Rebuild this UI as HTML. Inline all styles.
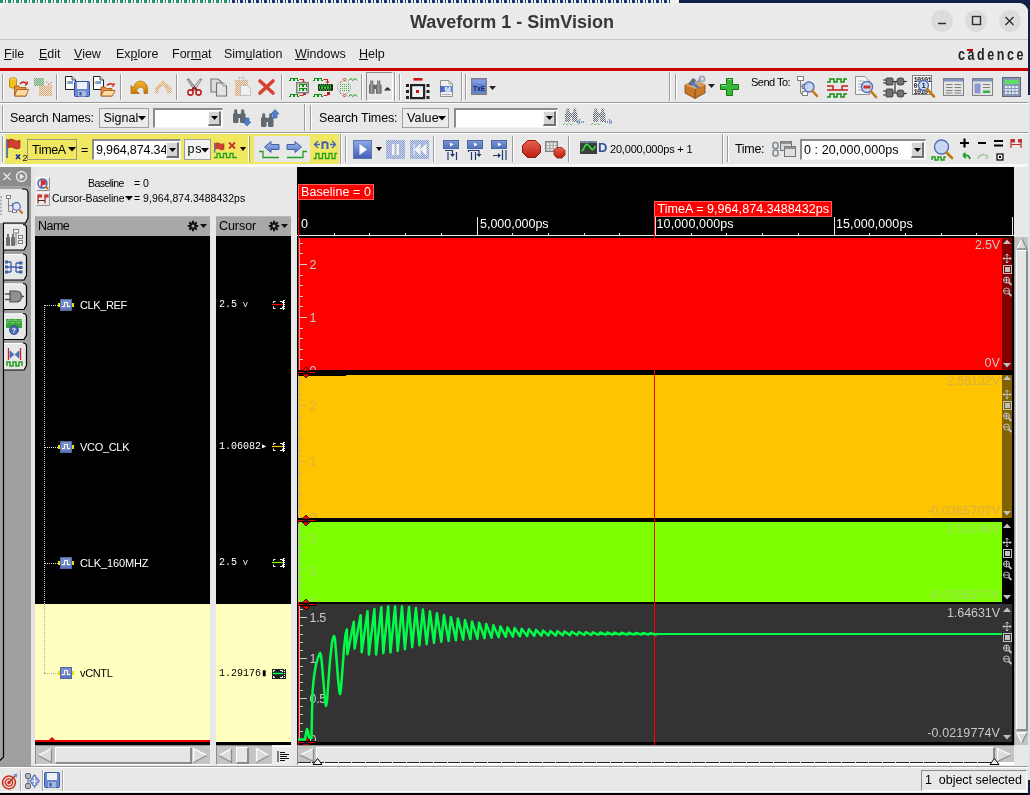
<!DOCTYPE html>
<html><head><meta charset="utf-8">
<style>
*{box-sizing:border-box;margin:0;padding:0}
html,body{width:1030px;height:795px;overflow:hidden;background:#10204a;font-family:"Liberation Sans",sans-serif;}
#root{position:absolute;left:0;top:0;width:1030px;height:795px;overflow:hidden;will-change:transform}
.a{position:absolute}
svg{position:absolute;overflow:visible}
#bgtop{position:absolute;left:0;top:0;width:679px;height:12px;background:#f4f4f4}
#bgtop2{position:absolute;left:0;top:0;width:232px;height:3px;background:repeating-linear-gradient(90deg,#2a9078 0,#2a9078 3px,#e8f0ec 3px,#e8f0ec 5px,#2a9078 5px,#2a9078 6px,#f4f4f4 6px,#f4f4f4 8px)}
#bgtop3{position:absolute;left:232px;top:0;width:440px;height:3px;background:repeating-linear-gradient(90deg,#1c3470 0,#1c3470 3px,#e8ecf4 3px,#e8ecf4 5px,#1c3470 5px,#1c3470 6px,#f4f4f4 6px,#f4f4f4 8px)}
#win{position:absolute;left:0;top:3px;width:1028px;height:790px;background:#e8e8e8;border-radius:9px 9px 0 0;overflow:hidden}
#title{position:absolute;left:0;top:0;width:1028px;height:37px;background:#ebebeb;border-bottom:1px solid #c6c6c6}
#title .t{position:absolute;left:0;width:1024px;top:7px;text-align:center;font-weight:bold;font-size:18px;color:#2e2e2e}
.wbtn{position:absolute;top:7px;width:22px;height:22px;border-radius:11px;background:#dcdcdc}
#menu{position:absolute;left:0;top:37px;width:1028px;height:28px}
#menu span{position:absolute;top:7px;font-size:12.5px;color:#111}
#redline{position:absolute;left:0;top:65px;width:1028px;height:3px;background:#cc0000}
.hl{position:absolute;left:0;width:1028px;height:1px}
.t{position:absolute;font-size:12.5px;color:#000;white-space:nowrap;line-height:14px}
.g{color:#c8c8c8}
.w{color:#fff}
.m{font-family:"Liberation Mono",monospace;font-size:10px;color:#fff;position:absolute;white-space:nowrap;line-height:12px}
</style></head><body><div id="root">
<div id="bgtop"></div><div id="bgtop2"></div><div id="bgtop3"></div>
<div class="a" style="left:1028px;top:95px;width:2px;height:685px;background:#dfe3ec"></div>
<div class="a" style="left:0;top:793px;width:1028px;height:2px;background:#000"></div>
<div id="win">
 <div id="title"><div class="t" style="position:absolute;left:0;width:1024px;top:9px;text-align:center;font-weight:bold;font-size:18px;line-height:normal;color:#383838">Waveform 1 - SimVision</div>
  <div class="wbtn" style="left:931px"></div><div class="wbtn" style="left:965px"></div><div class="wbtn" style="left:999px"></div>
  <svg style="left:931px;top:7px" width="90" height="22" viewBox="0 0 90 22"><g stroke="#2e2e2e" stroke-width="1.4" fill="none"><path d="M7 13.500H15"/><rect x="41.5" y="6.5" width="8" height="8"/><path d="M74.5 7l8 8M82.500 7l-8 8"/></g></svg>
 </div>
 <div id="menu">
  <span style="left:4px"><u>F</u>ile</span><span style="left:39px"><u>E</u>dit</span><span style="left:74px"><u>V</u>iew</span><span style="left:116px">Ex<u>p</u>lore</span><span style="left:172px">For<u>m</u>at</span><span style="left:224px">Sim<u>u</u>lation</span><span style="left:295px"><u>W</u>indows</span><span style="left:359px"><u>H</u>elp</span>
  <div class="a" style="left:957.500px;top:5.500px;font-size:16px;letter-spacing:3.300px;color:#222;font-weight:bold;transform:scaleX(0.78);transform-origin:left">cadence</div>
  <div class="a" style="left:967px;top:9px;width:6px;height:2px;background:#cc0000"></div>
 </div>
 <div id="redline"></div>
<div id="tb" class="a" style="left:0;top:68px;width:1028px;height:96px">
<div class="hl" style="top:31px;background:#9a9a9a"></div><div class="hl" style="top:32px;background:#fff"></div>
<div class="hl" style="top:61px;background:#9a9a9a"></div><div class="hl" style="top:62px;background:#fff"></div>
<div class="a" style="left:5px;top:63px;width:334px;height:30px;background:#f0e860;"></div>
<div class="a" style="left:254px;top:65px;width:56px;height:26px;background:#e8e8e8;"></div>
<div class="hl" style="top:93px;background:#f8f8f8;height:3px"></div>
<div class="a" style="left:2px;top:3px;width:1px;height:26px;background:#9c9c9c;"></div>
<div class="a" style="left:3px;top:3px;width:1px;height:26px;background:#fff;"></div>
<svg style="left:9px;top:6px" width="20" height="20" viewBox="0 0 20 20"><ellipse cx="4" cy="2.500" rx="3.500" ry="1.800" fill="#ffe860" stroke="#b08000" stroke-width="0.800"/><path d="M0.500 2.500V10Q4 12.500 7.500 10V2.500" fill="#f0c020" stroke="#b08000" stroke-width="0.800"/><path d="M5.500 9H10L11.500 10.500H17V19H5.500Z" fill="#e89040" stroke="#a05010" stroke-width="0.800"/><path d="M5.500 19L8 12.500H19.500L17 19Z" fill="#ffd8a0" stroke="#a05010" stroke-width="0.800"/><path d="M11 7Q14 3 18 7M18 7L16 8.500M18 7L18.500 4.500" stroke="#d02020" stroke-width="1.300" fill="none"/></svg>
<svg style="left:33px;top:6px" width="20" height="20" viewBox="0 0 20 20"><defs><pattern id="dg" width="2" height="2" patternUnits="userSpaceOnUse"><rect width="1" height="1" fill="#60c060"/><rect x="1" y="1" width="1" height="1" fill="#60c060"/></pattern><pattern id="do" width="2" height="2" patternUnits="userSpaceOnUse"><rect width="1" height="1" fill="#e0a060"/><rect x="1" y="1" width="1" height="1" fill="#e0a060"/></pattern><pattern id="dk" width="2" height="2" patternUnits="userSpaceOnUse"><rect width="1" height="1" fill="#606878"/><rect x="1" y="1" width="1" height="1" fill="#606878"/></pattern><pattern id="db" width="2" height="2" patternUnits="userSpaceOnUse"><rect width="1" height="1" fill="#5070b8"/><rect x="1" y="1" width="1" height="1" fill="#5070b8"/></pattern></defs><rect x="1" y="1" width="10" height="8" fill="url(#dg)"/><rect x="1" y="1" width="10" height="8" fill="#888" opacity="0.250"/><rect x="6" y="9" width="13" height="10" fill="url(#do)"/><path d="M13 5L19 9M19 5L14 9" stroke="#e06060" stroke-width="1" stroke-dasharray="1 1"/></svg>
<div class="a" style="left:56px;top:3px;width:1px;height:26px;background:#9c9c9c;"></div>
<div class="a" style="left:57px;top:3px;width:1px;height:26px;background:#fff;"></div>
<svg style="left:65px;top:5px" width="25" height="21" viewBox="0 0 25 21"><path d="M0.500 0.500H7L10.500 4V13.500H0.500Z" fill="#fff" stroke="#222" stroke-width="1"/><path d="M7 0.500V4H10.500" fill="#ddd" stroke="#222" stroke-width="0.800"/><rect x="2" y="5" width="6" height="3" fill="#70a0e0"/><rect x="1.500" y="5.500" width="2" height="1.500" fill="#e8d040"/><rect x="9.500" y="5.500" width="15" height="15" rx="1" fill="#6888d0" stroke="#3050a0"/><rect x="12" y="6" width="10" height="7" fill="#f0f0f8"/><rect x="13" y="15" width="8" height="5.500" fill="#a8b8e0"/><rect x="14.500" y="16" width="2" height="3.500" fill="#3050a0"/></svg>
<svg style="left:93px;top:5px" width="25" height="21" viewBox="0 0 25 21"><path d="M0.500 0.500H7L10.500 4V13.500H0.500Z" fill="#fff" stroke="#222" stroke-width="1"/><path d="M7 0.500V4H10.500" fill="#ddd" stroke="#222" stroke-width="0.800"/><rect x="2" y="5" width="6" height="3" fill="#70a0e0"/><rect x="1.500" y="5.500" width="2" height="1.500" fill="#e8d040"/><path d="M8 11H12L13.500 12.500H19V20H8Z" fill="#e89040" stroke="#a05010" stroke-width="0.800"/><path d="M8 20L10.500 14.500H22L19.500 20Z" fill="#ffd8a0" stroke="#a05010" stroke-width="0.800"/><path d="M14 9.500Q17 6 21 9.500M21 9.500L19 10.500M21 9.500V7" stroke="#d02020" stroke-width="1.300" fill="none"/></svg>
<div class="a" style="left:120px;top:3px;width:1px;height:26px;background:#9c9c9c;"></div>
<div class="a" style="left:121px;top:3px;width:1px;height:26px;background:#fff;"></div>
<svg style="left:130px;top:9px" width="19" height="15" viewBox="0 0 19 15"><defs><linearGradient id="ug" x1="0" y1="0" x2="0" y2="1"><stop offset="0" stop-color="#f8b830"/><stop offset="1" stop-color="#c87800"/></linearGradient></defs><path d="M1 5.500V13.500H9.500L6.500 10.500Q8.500 6 12 7Q14.500 8.500 14 13.500H17.500Q19 2.500 11 1Q5 1 3.500 8Z" fill="url(#ug)" stroke="#a86800" stroke-width="0.700"/></svg>
<svg style="left:154px;top:9px" width="19" height="15" viewBox="0 0 19 15"><path d="M1 8.500L9 1L17.500 8.500V13.500H13V10L9 5.500L4.500 10V13.500H1Z" fill="url(#do)"/><path d="M1 8.500L9 1L17.500 8.500" stroke="#f0c060" stroke-width="1.200" fill="none" stroke-dasharray="1 1"/></svg>
<div class="a" style="left:176px;top:3px;width:1px;height:26px;background:#9c9c9c;"></div>
<div class="a" style="left:177px;top:3px;width:1px;height:26px;background:#fff;"></div>
<svg style="left:185px;top:6px" width="19" height="20" viewBox="0 0 19 20"><path d="M2 2L4 2L11.500 12L9.500 13.500Z" fill="#b8b8b8" stroke="#606060" stroke-width="0.700"/><path d="M17 2L15 2L7.500 12L9.500 13.500Z" fill="#d8d8d8" stroke="#606060" stroke-width="0.700"/><circle cx="5.500" cy="15.500" r="2.600" fill="#f4f4f4" stroke="#c02020" stroke-width="1.600"/><circle cx="13.500" cy="15.500" r="2.600" fill="#f4f4f4" stroke="#c02020" stroke-width="1.600"/><path d="M7 13L9.500 10.500L12 13" stroke="#a01818" stroke-width="1.800" fill="none"/></svg>
<svg style="left:210px;top:7px" width="18" height="19" viewBox="0 0 18 19"><path d="M1 1H8L11.500 4V14H1Z" fill="#dcdcdc" stroke="#787878" stroke-width="1.200"/><path d="M6.500 5H13L16.500 8V18H6.500Z" fill="#e4e4e4" stroke="#787878" stroke-width="1.200"/><path d="M13 5V8H16.500" fill="#f8f8f8" stroke="#787878" stroke-width="0.800"/></svg>
<svg style="left:234px;top:6px" width="18" height="20" viewBox="0 0 18 20"><rect x="1" y="3" width="13" height="16" fill="url(#do)"/><rect x="5" y="0.500" width="5" height="3" fill="none" stroke="#a0a0a0" stroke-dasharray="1 1"/><path d="M6.500 8.500H13L16.500 11.500V18.500H6.500Z" fill="#f0f0f0" stroke="#a0a0a0" stroke-dasharray="1 1"/></svg>
<svg style="left:258px;top:8px" width="17" height="16" viewBox="0 0 17 16"><path d="M2 2L15 14M15 2L2 14" stroke="#d84030" stroke-width="3.600" stroke-linecap="round"/></svg>
<div class="a" style="left:281px;top:3px;width:1px;height:26px;background:#9c9c9c;"></div>
<div class="a" style="left:282px;top:3px;width:1px;height:26px;background:#fff;"></div>
<svg style="left:289px;top:6px" width="22" height="21" viewBox="0 0 22 21"><path d="M0 3.5h1.500v-2h3v2h1v-2h3v2h1.500" stroke="#109010" stroke-width="1" fill="none" shape-rendering="crispEdges"/><path d="M0 19.5h1.500v-2h3v2h1v-2h3v2h1.500" stroke="#109010" stroke-width="1" fill="none" shape-rendering="crispEdges"/><path d="M10.500 2.500h4v2.500" stroke="#d02020" stroke-width="1.200" fill="none"/><path d="M12.500 4.500h4l-2 2.500z" fill="#d02020"/><path d="M10.500 18.500h4" stroke="#d02020" stroke-width="1.200"/><rect x="14" y="15" width="3" height="3" fill="#c01010"/><rect x="7.750" y="5.750" width="11.500" height="10" fill="#e4e4e4" stroke="#808080" stroke-width="1.500"/><path d="M9.500 9.500h1v-2h3v2h1v-2h3v2M9.500 13.500h1v-2h3v2h1v-2h3v2" stroke="#109010" stroke-width="1" fill="none" shape-rendering="crispEdges"/></svg>
<svg style="left:313px;top:6px" width="22" height="21" viewBox="0 0 22 21"><path d="M0 3.5h1.500v-2h3v2h1v-2h3v2h1.500" stroke="#109010" stroke-width="1" fill="none" shape-rendering="crispEdges"/><path d="M0 19.5h1.500v-2h3v2h1v-2h3v2h1.500" stroke="#109010" stroke-width="1" fill="none" shape-rendering="crispEdges"/><path d="M10.500 2.500h4v2.500" stroke="#d02020" stroke-width="1.200" fill="none"/><path d="M12.500 4.500h4l-2 2.500z" fill="#d02020"/><path d="M10.500 18.500h4" stroke="#d02020" stroke-width="1.200"/><rect x="14" y="15" width="3" height="3" fill="#c01010"/><rect x="5" y="7" width="15" height="7" fill="#202020"/><g fill="none" stroke="#30e030" stroke-width="1"><rect x="6.500" y="8.500" width="2" height="4" rx="1"/><rect x="9.500" y="8.500" width="2" height="4" rx="1"/><rect x="12.500" y="8.500" width="2" height="4" rx="1"/><rect x="15.500" y="8.500" width="2" height="4" rx="1"/></g><path d="M5 7.500h15M5 13.500h15" stroke="#30c030" stroke-width="0.800" stroke-dasharray="1 1"/></svg>
<svg style="left:337px;top:6px" width="22" height="21" viewBox="0 0 22 21"><circle cx="7" cy="10.500" r="6.500" fill="none" stroke="#909090" stroke-width="1" stroke-dasharray="1 1"/><g fill="#40b040"><rect x="3" y="7" width="1" height="1"/><rect x="5" y="7" width="1" height="1"/><rect x="7" y="7" width="1" height="1"/><rect x="9" y="7" width="1" height="1"/><rect x="11" y="7" width="1" height="1"/><rect x="3" y="9" width="1" height="1"/><rect x="5" y="9" width="1" height="1"/><rect x="7" y="9" width="1" height="1"/><rect x="9" y="9" width="1" height="1"/><rect x="11" y="9" width="1" height="1"/><rect x="3" y="11" width="1" height="1"/><rect x="5" y="11" width="1" height="1"/><rect x="7" y="11" width="1" height="1"/><rect x="9" y="11" width="1" height="1"/><rect x="11" y="11" width="1" height="1"/><rect x="3" y="13" width="1" height="1"/><rect x="5" y="13" width="1" height="1"/><rect x="7" y="13" width="1" height="1"/><rect x="9" y="13" width="1" height="1"/><rect x="11" y="13" width="1" height="1"/></g><path d="M7.500 1L9 2.500L7.500 4L6 2.500ZM7.500 17L9 18.500L7.500 20L6 18.500Z" fill="none" stroke="#d02020" stroke-width="0.900"/><path d="M3.500 4.500v1M3.500 15.500v1" stroke="#d02020"/><path d="M11.500 3.500l2.200-2l2.200 2l2.200-2l2.200 2M11.500 19.500l2.200-2l2.200 2l2.200-2l2.200 2" stroke="#109010" stroke-width="1" fill="none"/></svg>
<div class="a" style="left:361px;top:3px;width:1px;height:26px;background:#9c9c9c;"></div>
<div class="a" style="left:362px;top:3px;width:1px;height:26px;background:#fff;"></div>
<div class="a" style="left:366px;top:1px;width:27px;height:29px;background:#e8e8e8;border:1px solid #8c8c8c;border-right-color:#fff;border-bottom-color:#fff"></div>
<svg style="left:369px;top:9px" width="13" height="14" viewBox="0 0 13 14"><defs><linearGradient id="bg2" x1="0" y1="0" x2="1" y2="0"><stop offset="0" stop-color="#606060"/><stop offset="0.500" stop-color="#a0a0a0"/><stop offset="1" stop-color="#585858"/></linearGradient></defs><rect x="0" y="4" width="5.500" height="10" rx="1.500" fill="url(#bg2)"/><rect x="7" y="4" width="5.500" height="10" rx="1.500" fill="url(#bg2)"/><rect x="1.200" y="0.500" width="3" height="4" fill="url(#bg2)"/><rect x="8.200" y="0.500" width="3" height="4" fill="url(#bg2)"/><rect x="5" y="5" width="2.500" height="4" fill="#686868"/></svg>
<svg style="left:384px;top:16px" width="7" height="4" viewBox="0 0 7 4"><path d="M0 3.500H7L4.500 0.500H2.500Z" fill="#333"/></svg>
<div class="a" style="left:394px;top:1px;width:1px;height:29px;background:#9c9c9c;"></div>
<div class="a" style="left:395px;top:1px;width:1px;height:29px;background:#fff;"></div>
<div class="a" style="left:399px;top:3px;width:1px;height:26px;background:#9c9c9c;"></div>
<div class="a" style="left:400px;top:3px;width:1px;height:26px;background:#fff;"></div>
<svg style="left:406px;top:6px" width="24" height="23" viewBox="0 0 24 23"><rect x="7.500" y="1" width="9" height="2.600" fill="#d01010"/><rect x="5.100" y="8.100" width="13" height="13" fill="#f0f0f0" stroke="#222" stroke-width="2.200"/><rect x="10" y="13" width="3" height="3" fill="#d01010"/><g fill="#222"><rect x="0" y="7" width="3" height="3"/><rect x="0" y="13" width="3" height="3"/><rect x="0" y="19" width="3" height="3"/><rect x="20.500" y="7" width="3" height="3"/><rect x="20.500" y="13" width="3" height="3"/><rect x="20.500" y="19" width="3" height="3"/></g></svg>
<svg style="left:439px;top:9px" width="15" height="17" viewBox="0 0 15 17"><path d="M1.500 0.500H10L13.500 4V16.500H1.500Z" fill="#f0f0f0" stroke="#909090"/><path d="M10 0.500V4H13.500" fill="none" stroke="#909090" stroke-width="0.800"/><rect x="1" y="6" width="13" height="6" fill="#6888d0"/><rect x="1" y="6" width="3.500" height="6" fill="#4868b8"/><text x="9" y="11.500" font-size="7" font-weight="bold" fill="#fff" text-anchor="middle" font-family="Liberation Sans">M</text><path d="M3 14.500H12" stroke="#b0b0b0"/></svg>
<div class="a" style="left:461px;top:1px;width:1px;height:29px;background:#9c9c9c;"></div>
<div class="a" style="left:462px;top:1px;width:1px;height:29px;background:#fff;"></div>
<div class="a" style="left:465px;top:3px;width:1px;height:26px;background:#9c9c9c;"></div>
<div class="a" style="left:466px;top:3px;width:1px;height:26px;background:#fff;"></div>
<svg style="left:471px;top:7px" width="16" height="17" viewBox="0 0 16 17"><rect x="0.750" y="0.750" width="14.500" height="15.500" fill="#6484dc" stroke="#808080" stroke-width="1.500"/><rect x="1.500" y="1.500" width="13" height="4" fill="#7c9ce8"/><text x="8" y="13" font-size="8" font-weight="bold" fill="#1a2040" text-anchor="middle" font-family="Liberation Sans" textLength="12" lengthAdjust="spacingAndGlyphs">TxE</text></svg>
<svg style="left:488.5px;top:15px" width="7" height="4" viewBox="0 0 7 4"><path d="M0 0H7L3.500 4Z" fill="#222"/></svg>
<div class="a" style="left:669px;top:1px;width:1px;height:29px;background:#9c9c9c;"></div>
<div class="a" style="left:670px;top:1px;width:1px;height:29px;background:#fff;"></div>
<div class="a" style="left:675px;top:3px;width:1px;height:26px;background:#9c9c9c;"></div>
<div class="a" style="left:676px;top:3px;width:1px;height:26px;background:#fff;"></div>
<svg style="left:683px;top:5px" width="24" height="23" viewBox="0 0 24 23"><path d="M2 9L12 5L22 9V17L12 22.500L2 17Z" fill="#c87828" stroke="#804010" stroke-width="0.800"/><path d="M2 9L12 13L22 9L12 5Z" fill="#e8a050"/><path d="M12 13V22.500" stroke="#804010" stroke-width="0.800"/><path d="M5 8L10 2L13 4L9 10Z" fill="#606870"/><path d="M9 11L18 3" stroke="#a0a8b8" stroke-width="2.600"/><circle cx="19" cy="3" r="2.600" fill="none" stroke="#a0a8b8" stroke-width="1.800"/><path d="M8 6L16 12" stroke="#5878c0" stroke-width="2.200"/></svg>
<svg style="left:708px;top:13px" width="7" height="4" viewBox="0 0 7 4"><path d="M0 0H7L3.500 4Z" fill="#222"/></svg>
<svg style="left:720px;top:7px" width="19" height="18" viewBox="0 0 19 18"><path d="M6.500 0.500H12.500V6.500H18.500V11.500H12.500V17.500H6.500V11.500H0.500V6.500H6.500Z" fill="#38b838" stroke="#187818"/><path d="M7.500 1.500H11.500M1.500 7.500H6.500" stroke="#90e090" stroke-width="1"/></svg>
<div class="t" style="left:751px;top:4px;font-size:11px;letter-spacing:-0.519px">Send To:</div>
<svg style="left:797px;top:5px" width="22" height="22" viewBox="0 0 22 22"><g fill="#fff" stroke="#808080"><rect x="0.500" y="0.500" width="6" height="4"/><rect x="5.500" y="8.500" width="5" height="4"/><rect x="5.500" y="15.500" width="5" height="4"/></g><path d="M3.500 4.500V17.500H5.500M3.500 10.500H5.500" stroke="#808080" fill="none"/><circle cx="12" cy="11" r="5" fill="#c4d4f4" fill-opacity="0.850" stroke="#5070b8" stroke-width="1.400"/><path d="M15.5 15L20 20" stroke="#c07818" stroke-width="2.600" stroke-linecap="round"/></svg>
<svg style="left:827px;top:6px" width="21" height="21" viewBox="0 0 21 21"><path d="M0 5h3v-3h4v3h3v-3h4v3h3v-3h3M0 20h3v-3h4v3h3v-3h4v3h3v-3h3" stroke="#109010" stroke-width="1.500" fill="none"/><path d="M0 9h6v4h9v-4h6M0 13h6M15 13h6" stroke="#c02020" stroke-width="1.500" fill="none"/></svg>
<svg style="left:855px;top:5px" width="23" height="23" viewBox="0 0 23 23"><path d="M0.500 0.500H10L14.500 5V18.500H0.500Z" fill="#f4f4f4" stroke="#909090"/><path d="M3 5H9M3 8H11M3 11H11M3 14H9" stroke="#b0b0b0"/><circle cx="12" cy="11" r="5.5" fill="#c4d4f4" fill-opacity="0.850" stroke="#5070b8" stroke-width="1.400"/><path d="M16 15.5L21 21" stroke="#c07818" stroke-width="2.600" stroke-linecap="round"/><rect x="8.500" y="9.500" width="7" height="3" fill="#d03030"/></svg>
<svg style="left:883px;top:6px" width="24" height="21" viewBox="0 0 24 21"><g fill="#707070" stroke="#303030" stroke-width="0.800"><rect x="3" y="1" width="7" height="7" rx="1"/><rect x="14" y="1" width="7" height="7" rx="2.500"/><rect x="3" y="12" width="7" height="8" rx="1"/><rect x="14" y="13" width="7" height="7" rx="2.500"/></g><path d="M0 3H3M0 6H3M10 4.500H14M21 4.500H24M0 14H3M0 18H3M10 16H14M21 16.500H24M12 4.500V16" stroke="#303030" stroke-width="1.200" fill="none"/></svg>
<svg style="left:912px;top:4px" width="24" height="24" viewBox="0 0 24 24"><rect x="0.500" y="0.500" width="19" height="19" fill="#fff" stroke="#808080"/><text x="1.500" y="7" font-size="7" font-weight="bold" fill="#222" font-family="Liberation Mono" letter-spacing="-0.7">10101</text><text x="1.500" y="13" font-size="7" font-weight="bold" fill="#222" font-family="Liberation Mono">0</text><text x="1.500" y="19" font-size="7" font-weight="bold" fill="#222" font-family="Liberation Mono" letter-spacing="-0.7">1010</text><circle cx="11.5" cy="10.5" r="5" fill="#c4d4f4" fill-opacity="0.850" stroke="#5070b8" stroke-width="1.400"/><path d="M15.5 14.5L22 21.5" stroke="#c07818" stroke-width="2.600" stroke-linecap="round"/><text x="11.500" y="13" font-size="7.500" font-weight="bold" fill="#222" text-anchor="middle" font-family="Liberation Sans">1</text></svg>
<svg style="left:943px;top:7px" width="21" height="18" viewBox="0 0 21 18"><rect x="0.500" y="0.500" width="20" height="17" fill="#e4e4e4" stroke="#808080"/><rect x="1" y="1" width="19" height="2.500" fill="#8090c0"/><path d="M3 6.500H9.500M11.500 6.500H18M3 9.500H9.500M11.500 9.500H18M3 12.500H9.500M11.500 12.500H18M3 15H9.500M11.500 15H18" stroke="#808080"/></svg>
<svg style="left:972px;top:7px" width="21" height="18" viewBox="0 0 21 18"><rect x="0.500" y="0.500" width="20" height="17" fill="#e4e4e4" stroke="#808080"/><rect x="1" y="1" width="19" height="2.500" fill="#8090c0"/><rect x="2.500" y="5.500" width="6" height="10" fill="#8898d0"/><path d="M11 6.500H18M11 9.500H18" stroke="#808080"/><rect x="11" y="12.500" width="7" height="2.500" fill="#30b040"/></svg>
<svg style="left:1002px;top:6px" width="19" height="20" viewBox="0 0 19 20"><rect x="0.500" y="0.500" width="18" height="19" fill="#8898b8" stroke="#606880"/><rect x="2.500" y="3" width="14" height="4" fill="#60e060"/><g fill="#e8e8f0"><rect x="3" y="9" width="2.500" height="2"/><rect x="6.500" y="9" width="2.500" height="2"/><rect x="10" y="9" width="2.500" height="2"/><rect x="13.500" y="9" width="2.500" height="2"/><rect x="3" y="12" width="2.500" height="2"/><rect x="6.500" y="12" width="2.500" height="2"/><rect x="10" y="12" width="2.500" height="2"/><rect x="13.500" y="12" width="2.500" height="2"/><rect x="3" y="15" width="2.500" height="2"/><rect x="6.500" y="15" width="2.500" height="2"/><rect x="10" y="15" width="2.500" height="2"/><rect x="13.500" y="15" width="2.500" height="2"/></g></svg>
<div class="a" style="left:2px;top:34px;width:1px;height:25px;background:#9c9c9c;"></div>
<div class="a" style="left:3px;top:34px;width:1px;height:25px;background:#fff;"></div>
<div class="t" style="left:10px;top:40px;letter-spacing:-0.171px">Search Names:</div>
<div class="a" style="left:99px;top:37px;width:50px;height:20px;background:#ececec;border:1px solid #fff;border-right-color:#8c8c8c;border-bottom-color:#8c8c8c;outline:0"></div>
<div class="a" style="left:99px;top:37px;width:50px;height:20px;background:transparent;border:1px solid #a0a0a0"></div>
<div class="t" style="left:103.5px;top:40px;font-size:12.5px;letter-spacing:-0.010px">Signal</div>
<svg style="left:138px;top:45px" width="8" height="5" viewBox="0 0 8 5"><path d="M0 0H8L4 4.500Z" fill="#000"/></svg>
<div class="a" style="left:153px;top:37px;width:70px;height:20px;background:#fff;border:2px solid #8c8c8c;border-right:1px solid #f4f4f4;border-bottom:1px solid #f4f4f4;overflow:hidden"></div>
<div class="a" style="left:208px;top:40px;width:13px;height:15px;background:#d4d4d4;border:1px solid #f8f8f8;border-right:2px solid #707070;border-bottom:2px solid #707070"></div>
<svg style="left:210.5px;top:45px" width="7" height="4" viewBox="0 0 7 4"><path d="M0 0H7L3.500 4Z" fill="#000"/></svg>
<svg style="left:233px;top:38px" width="19" height="18" viewBox="0 0 19 18"><rect x="0" y="4" width="5.500" height="10" rx="1.500" fill="#606870"/><rect x="7" y="4" width="5.500" height="10" rx="1.500" fill="#606870"/><rect x="1.200" y="0.500" width="3" height="4" fill="#606870"/><rect x="8.200" y="0.500" width="3" height="4" fill="#606870"/><rect x="5" y="5" width="2.500" height="4" fill="#606870"/><path d="M12 9H16V13H18L14 17L10 13H12Z" fill="#5080d0" stroke="#3050a0" stroke-width="0.600"/></svg>
<svg style="left:261px;top:38px" width="19" height="18" viewBox="0 0 19 18"><g transform="translate(0,4)"><rect x="0" y="4" width="5.500" height="10" rx="1.500" fill="#606870"/><rect x="7" y="4" width="5.500" height="10" rx="1.500" fill="#606870"/><rect x="1.200" y="0.500" width="3" height="4" fill="#606870"/><rect x="8.200" y="0.500" width="3" height="4" fill="#606870"/><rect x="5" y="5" width="2.500" height="4" fill="#606870"/></g><path d="M12 9H16V5H18L14 0.500L10 5H12Z" fill="#5080d0" stroke="#3050a0" stroke-width="0.600"/></svg>
<div class="a" style="left:304px;top:33px;width:1px;height:27px;background:#9c9c9c;"></div>
<div class="a" style="left:305px;top:33px;width:1px;height:27px;background:#fff;"></div>
<div class="a" style="left:310px;top:34px;width:1px;height:25px;background:#9c9c9c;"></div>
<div class="a" style="left:311px;top:34px;width:1px;height:25px;background:#fff;"></div>
<div class="t" style="left:319px;top:40px;letter-spacing:-0.108px">Search Times:</div>
<div class="a" style="left:402px;top:37px;width:47px;height:20px;background:#ececec;border:1px solid #fff;border-right-color:#8c8c8c;border-bottom-color:#8c8c8c;outline:0"></div>
<div class="a" style="left:402px;top:37px;width:47px;height:20px;background:transparent;border:1px solid #a0a0a0"></div>
<div class="t" style="left:407px;top:40px;font-size:12.5px;letter-spacing:0.138px">Value</div>
<svg style="left:438px;top:45px" width="8" height="5" viewBox="0 0 8 5"><path d="M0 0H8L4 4.500Z" fill="#000"/></svg>
<div class="a" style="left:454px;top:37px;width:104px;height:20px;background:#fff;border:2px solid #8c8c8c;border-right:1px solid #f4f4f4;border-bottom:1px solid #f4f4f4;overflow:hidden"></div>
<div class="a" style="left:543px;top:40px;width:13px;height:15px;background:#d4d4d4;border:1px solid #f8f8f8;border-right:2px solid #707070;border-bottom:2px solid #707070"></div>
<svg style="left:545.5px;top:45px" width="7" height="4" viewBox="0 0 7 4"><path d="M0 0H7L3.500 4Z" fill="#000"/></svg>
<svg style="left:563px;top:37px" width="22" height="20" viewBox="0 0 22 20"><g transform="translate(2,0)"><rect x="0" y="4" width="5.500" height="10" rx="1.500" fill="url(#dk)"/><rect x="7" y="4" width="5.500" height="10" rx="1.500" fill="url(#dk)"/><rect x="1.200" y="0.500" width="3" height="4" fill="url(#dk)"/><rect x="8.200" y="0.500" width="3" height="4" fill="url(#dk)"/><rect x="5" y="5" width="2.500" height="4" fill="url(#dk)"/></g><path d="M0 17l2-2l2 2l2-2l2 2l2-2" stroke="#30a030" stroke-width="1" fill="none" stroke-dasharray="1 1"/><path d="M21 14H15M17 11.500L14 14L17 16.500" stroke="#5070b8" stroke-width="1.500" fill="none" stroke-dasharray="1 1"/></svg>
<svg style="left:591px;top:37px" width="22" height="20" viewBox="0 0 22 20"><g transform="translate(2,0)"><rect x="0" y="4" width="5.500" height="10" rx="1.500" fill="url(#dk)"/><rect x="7" y="4" width="5.500" height="10" rx="1.500" fill="url(#dk)"/><rect x="1.200" y="0.500" width="3" height="4" fill="url(#dk)"/><rect x="8.200" y="0.500" width="3" height="4" fill="url(#dk)"/><rect x="5" y="5" width="2.500" height="4" fill="url(#dk)"/></g><path d="M0 17l2-2l2 2l2-2l2 2l2-2" stroke="#30a030" stroke-width="1" fill="none" stroke-dasharray="1 1"/><path d="M14 14H20M18 11.500L21 14L18 16.500" stroke="#5070b8" stroke-width="1.500" fill="none" stroke-dasharray="1 1"/></svg>
<div class="a" style="left:2px;top:65px;width:1px;height:26px;background:#9c9c9c;"></div>
<div class="a" style="left:3px;top:65px;width:1px;height:26px;background:#fff;"></div>
<svg style="left:6px;top:67px" width="22" height="23" viewBox="0 0 22 23"><path d="M1 1V20" stroke="#5070b0" stroke-width="1.800"/><path d="M2 2Q5 0 8 2T14 2V10Q11 12 8 10T2 10Z" fill="#d04030" stroke="#902010" stroke-width="0.600"/><path d="M10 16.500L14 21M14 16.500L10 21" stroke="#203890" stroke-width="1.800"/><text x="16.500" y="22.500" font-size="9" fill="#111" font-family="Liberation Sans">2</text></svg>
<div class="a" style="left:27px;top:68px;width:50px;height:21px;background:#f0e860;border:1px solid #9a9a80"></div>
<div class="t" style="left:32px;top:72px;letter-spacing:-0.364px">TimeA</div>
<svg style="left:68px;top:76px" width="8" height="5" viewBox="0 0 8 5"><path d="M0 0H8L4 4.500Z" fill="#000"/></svg>
<div class="t" style="left:81px;top:72px;font-size:12.5px">=</div>
<div class="a" style="left:92px;top:68px;width:89px;height:21px;background:#fff;border:2px solid #8c8c8c;border-right:1px solid #f4f4f4;border-bottom:1px solid #f4f4f4;overflow:hidden"></div>
<div class="t" style="left:96px;top:72px;font-size:12.500px;width:70px;overflow:hidden;letter-spacing:-0.15px">9,964,874.3488432</div>
<div class="a" style="left:166px;top:71px;width:13px;height:16px;background:#d4d4d4;border:1px solid #f8f8f8;border-right:2px solid #707070;border-bottom:2px solid #707070"></div>
<svg style="left:168.5px;top:76.5px" width="7" height="4" viewBox="0 0 7 4"><path d="M0 0H7L3.500 4Z" fill="#000"/></svg>
<div class="a" style="left:184px;top:68px;width:27px;height:21px;background:#f2f2f2;border:1px solid #fff;border-right-color:#8c8c8c;border-bottom-color:#8c8c8c;outline:0"></div>
<div class="a" style="left:184px;top:68px;width:27px;height:21px;background:transparent;border:1px solid #a0a0a0"></div>
<div class="t" style="left:187.5px;top:71px;font-size:12.5px;letter-spacing:0.697px">ps</div>
<svg style="left:201px;top:76.5px" width="8" height="5" viewBox="0 0 8 5"><path d="M0 0H8L4 4.500Z" fill="#000"/></svg>
<svg style="left:214px;top:68px" width="24" height="22" viewBox="0 0 24 22"><g transform="translate(0,3) scale(0.72)"><path d="M1 1V15" stroke="#5070b0" stroke-width="1.800"/><path d="M2 2Q5 0 8 2T14 2V10Q11 12 8 10T2 10Z" fill="#d04030" stroke="#902010" stroke-width="0.600"/></g><path d="M15 3.500L21 9.500M21 3.500L15 9.500" stroke="#d03030" stroke-width="1.800"/><path d="M0 18.500H3V14.500H6V18.500H9.500V14.500H12.500V18.500H16V14.500H19V18.500H23" stroke="#20a020" stroke-width="1.300" fill="none"/></svg>
<svg style="left:240px;top:76px" width="6" height="4" viewBox="0 0 6 4"><path d="M0 0H6L3 4Z" fill="#000"/></svg>
<div class="a" style="left:248px;top:65px;width:1px;height:26px;background:#fffff0;"></div>
<div class="a" style="left:249px;top:65px;width:1px;height:26px;background:#a0a060;"></div>
<svg style="left:258px;top:69px" width="22" height="19" viewBox="0 0 22 19"><defs><linearGradient id="ag" x1="0" y1="0" x2="0" y2="1"><stop offset="0" stop-color="#a8bce8"/><stop offset="1" stop-color="#5878c8"/></linearGradient></defs><path d="M6.500 7L13 1.500V4.500H21V9.500H13V12.500Z" fill="url(#ag)" stroke="#4060a8" stroke-width="1"/><path d="M1 11.500H5V17.500H21" stroke="#20a020" stroke-width="1.300" fill="none"/></svg>
<svg style="left:286px;top:69px" width="22" height="19" viewBox="0 0 22 19"><path d="M15.500 7L9 1.500V4.500H1V9.500H9V12.500Z" fill="url(#ag)" stroke="#4060a8" stroke-width="1"/><path d="M21 11.500H17V17.500H1" stroke="#20a020" stroke-width="1.300" fill="none"/></svg>
<svg style="left:313px;top:68px" width="24" height="21" viewBox="0 0 24 21"><path d="M5 2L1.500 5.500L5 9M1.500 5.500H7M19 2L22.500 5.500L19 9M22.500 5.500H17" stroke="#4868c0" stroke-width="1.400" fill="none"/><path d="M9.500 10V2.500M9.500 4.500Q12 1.500 14.500 4.500V10" stroke="#4060b8" stroke-width="2" fill="none"/><path d="M0.500 19.500H3V14.500H6V19.500H9.500V14.500H12.500V19.500H16V14.500H19V19.500H22V14.500H24" stroke="#20a020" stroke-width="1.300" fill="none"/></svg>
<div class="a" style="left:340px;top:63px;width:1px;height:30px;background:#9c9c9c;"></div>
<div class="a" style="left:341px;top:63px;width:1px;height:30px;background:#fff;"></div>
<div class="a" style="left:345px;top:65px;width:1px;height:26px;background:#9c9c9c;"></div>
<div class="a" style="left:346px;top:65px;width:1px;height:26px;background:#fff;"></div>
<svg style="left:353px;top:69px" width="19" height="19" viewBox="0 0 19 19"><defs><linearGradient id="pg" x1="0" y1="0" x2="0" y2="1"><stop offset="0" stop-color="#90a8e8"/><stop offset="1" stop-color="#4060b8"/></linearGradient></defs><rect x="0.500" y="0.500" width="18" height="18" fill="url(#pg)" stroke="#6078b0"/><path d="M6.500 4L14 9.500L6.500 15Z" fill="#fff"/></svg>
<svg style="left:376px;top:76px" width="6" height="4" viewBox="0 0 6 4"><path d="M0 0H6L3 4Z" fill="#000"/></svg>
<svg style="left:386px;top:69px" width="19" height="19" viewBox="0 0 19 19"><rect x="0" y="0" width="19" height="19" fill="url(#db)"/><rect x="0" y="0" width="19" height="19" fill="#b8c4e8" opacity="0.550"/><rect x="6" y="4" width="2.500" height="11" fill="#f4f4f4"/><rect x="10.500" y="4" width="2.500" height="11" fill="#f4f4f4"/></svg>
<svg style="left:410px;top:69px" width="19" height="19" viewBox="0 0 19 19"><rect x="0" y="0" width="19" height="19" fill="url(#db)"/><rect x="0" y="0" width="19" height="19" fill="#b8c4e8" opacity="0.550"/><path d="M4 4V15M10 4L5 9.500L10 15ZM16 4L11 9.500L16 15Z" fill="#f4f4f4" stroke="#f4f4f4"/></svg>
<div class="a" style="left:433px;top:65px;width:1px;height:26px;background:#9c9c9c;"></div>
<div class="a" style="left:434px;top:65px;width:1px;height:26px;background:#fff;"></div>
<svg style="left:443px;top:69px" width="17" height="21" viewBox="0 0 17 21"><defs><linearGradient id="sg" x1="0" y1="0" x2="0" y2="1"><stop offset="0" stop-color="#8098d8"/><stop offset="1" stop-color="#5070b8"/></linearGradient></defs><rect x="0.500" y="0.500" width="15" height="8" fill="url(#sg)" stroke="#4868a8"/><path d="M7 2.500L10.500 4.500L7 6.500Z" fill="#fff"/><path d="M2 10.500H9.500V15" stroke="#203870" stroke-width="1.200" fill="none"/><path d="M7 14L9.500 17L12 14Z" fill="#203870"/><path d="M5 12V20M13.500 12V20" stroke="#203870" stroke-width="1.200"/></svg>
<svg style="left:467px;top:69px" width="17" height="21" viewBox="0 0 17 21"><defs><linearGradient id="sg" x1="0" y1="0" x2="0" y2="1"><stop offset="0" stop-color="#8098d8"/><stop offset="1" stop-color="#5070b8"/></linearGradient></defs><rect x="0.500" y="0.500" width="15" height="8" fill="url(#sg)" stroke="#4868a8"/><path d="M7 2.500L10.500 4.500L7 6.500Z" fill="#fff"/><path d="M1.500 12V10.500H12V15" stroke="#203870" stroke-width="1.200" fill="none"/><path d="M9.500 14L12 17L14.500 14Z" fill="#203870"/><path d="M4.500 12V20M8.500 12V20" stroke="#203870" stroke-width="1.200"/></svg>
<svg style="left:491px;top:69px" width="17" height="21" viewBox="0 0 17 21"><defs><linearGradient id="sg" x1="0" y1="0" x2="0" y2="1"><stop offset="0" stop-color="#8098d8"/><stop offset="1" stop-color="#5070b8"/></linearGradient></defs><rect x="0.500" y="0.500" width="15" height="8" fill="url(#sg)" stroke="#4868a8"/><path d="M7 2.500L10.500 4.500L7 6.500Z" fill="#fff"/><path d="M2 15.500H8" stroke="#203870" stroke-width="1.200"/><path d="M7 13L10 15.500L7 18Z" fill="#203870"/><path d="M11.500 10V20M15 10V20" stroke="#203870" stroke-width="1.200"/></svg>
<div class="a" style="left:512px;top:65px;width:1px;height:26px;background:#9c9c9c;"></div>
<div class="a" style="left:513px;top:65px;width:1px;height:26px;background:#fff;"></div>
<svg style="left:522px;top:69px" width="19" height="18" viewBox="0 0 19 18"><defs><linearGradient id="rg" x1="0" y1="0" x2="0" y2="1"><stop offset="0" stop-color="#e86050"/><stop offset="1" stop-color="#b82010"/></linearGradient></defs><path d="M5.500 0.500H13.500L18.500 5.500V12.500L13.500 17.500H5.500L0.500 12.500V5.500Z" fill="url(#rg)" stroke="#901808"/></svg>
<svg style="left:545px;top:70px" width="21" height="19" viewBox="0 0 21 19"><rect x="0.500" y="0.500" width="12" height="10" fill="#b0b0b0" stroke="#808080"/><g fill="#e8e8e8"><rect x="2" y="2" width="2" height="2"/><rect x="5.500" y="2" width="2" height="2"/><rect x="9" y="2" width="2" height="2"/><rect x="2" y="5" width="2" height="2"/><rect x="5.500" y="5" width="2" height="2"/><rect x="9" y="5" width="2" height="2"/><rect x="2" y="8" width="2" height="1.500"/><rect x="5.500" y="8" width="2" height="1.500"/></g><path d="M12 6.500H17L20 9.500V14L17 17H12L9 14V9.500Z" fill="url(#rg)" stroke="#901808" stroke-width="0.800"/></svg>
<div class="a" style="left:568px;top:65px;width:1px;height:26px;background:#9c9c9c;"></div>
<div class="a" style="left:569px;top:65px;width:1px;height:26px;background:#fff;"></div>
<svg style="left:580px;top:70px" width="17" height="13" viewBox="0 0 17 13"><rect x="0" y="0" width="17" height="13" fill="#384038"/><rect x="0" y="0" width="17" height="2" fill="#7080a0"/><path d="M1.500 10Q3 10 4.500 6T8 4T11.500 8T15.500 5" stroke="#30e040" stroke-width="1.600" fill="none"/></svg>
<div class="t" style="left:598px;top:70px;font-weight:bold;font-size:13px;color:#3050a0">D</div>
<div class="t" style="left:610px;top:71px;font-size:11px;letter-spacing:-0.182px">20,000,000ps + 1</div>
<div class="a" style="left:722px;top:63px;width:1px;height:30px;background:#9c9c9c;"></div>
<div class="a" style="left:723px;top:63px;width:1px;height:30px;background:#fff;"></div>
<div class="a" style="left:727px;top:65px;width:1px;height:26px;background:#9c9c9c;"></div>
<div class="a" style="left:728px;top:65px;width:1px;height:26px;background:#fff;"></div>
<div class="t" style="left:735px;top:71px;letter-spacing:-0.299px">Time:</div>
<svg style="left:772px;top:70px" width="24" height="17" viewBox="0 0 24 17"><rect x="8.500" y="0.500" width="11" height="9" fill="#d8d8d8" stroke="#707070"/><rect x="8.500" y="0.500" width="11" height="2.500" fill="#909090"/><rect x="12.500" y="5.500" width="11" height="10" fill="#e0e0e0" stroke="#707070"/><rect x="12.500" y="5.500" width="11" height="2.500" fill="#909090"/><g fill="none" stroke="#808890" stroke-width="1.600"><rect x="1" y="1.500" width="5" height="6" rx="2"/><rect x="1" y="9" width="5" height="6" rx="2"/></g></svg>
<div class="a" style="left:800px;top:68px;width:126px;height:21px;background:#fff;border:2px solid #8c8c8c;border-right:1px solid #f4f4f4;border-bottom:1px solid #f4f4f4;overflow:hidden"></div>
<div class="t" style="left:804px;top:72px;font-size:12.500px;width:107px;overflow:hidden;letter-spacing:0.097px">0 : 20,000,000ps</div>
<div class="a" style="left:911px;top:71px;width:13px;height:16px;background:#d4d4d4;border:1px solid #f8f8f8;border-right:2px solid #707070;border-bottom:2px solid #707070"></div>
<svg style="left:913.5px;top:76.5px" width="7" height="4" viewBox="0 0 7 4"><path d="M0 0H7L3.500 4Z" fill="#000"/></svg>
<svg style="left:932px;top:67px" width="23" height="23" viewBox="0 0 23 23"><circle cx="9.5" cy="9" r="7" fill="#c4d4f4" fill-opacity="0.850" stroke="#5070b8" stroke-width="1.400"/><path d="M14.5 14.5L20 20" stroke="#c07818" stroke-width="2.600" stroke-linecap="round"/><path d="M0 22V19H3V22H6V19H9V22H12V19H14" stroke="#20a020" stroke-width="1.500" fill="none"/></svg>
<svg style="left:960px;top:67px" width="64" height="24" viewBox="0 0 64 24"><path d="M0 5H9M4.500 0.500V9.500" stroke="#000" stroke-width="2.200"/><path d="M18 5H26" stroke="#000" stroke-width="2.200"/><path d="M34 3H43M34 7.500H43" stroke="#000" stroke-width="2.200"/><path d="M51 1V10M61 1V10M51 6.500H61" stroke="#c03030" stroke-width="1.200"/><rect x="51" y="1" width="4" height="3.500" fill="#c03030"/><rect x="58" y="1" width="4" height="3.500" fill="#c03030"/><path d="M10 21Q9 16 3 17.500M3 17.500L5.500 15M3 17.500L6 20" stroke="#20a030" stroke-width="2" fill="none"/><path d="M18 20Q22 14 28 18.500L26 20.500" stroke="#60b060" stroke-width="1.600" fill="none" stroke-dasharray="1 1"/><rect x="37" y="16" width="6" height="6" fill="none" stroke="#000" stroke-width="1.200"/><rect x="39" y="18" width="2" height="2" fill="#000"/></svg>
</div>
<div id="side" class="a" style="left:0;top:164px;width:31px;height:599px;background:#a0a0a0;overflow:hidden">
<div class="a" style="left:0;top:0;width:31px;height:19px;background:#8c8c8c"></div>
<svg style="left:0;top:0" width="31" height="599" viewBox="0 167 31 599">
<g stroke="#e8e8e8" stroke-width="1.300" fill="none"><path d="M3.500 173L10.500 180M10.500 173L3.500 180"/><circle cx="21.500" cy="176.500" r="5"/></g><path d="M19.800 173.500L24.500 176.500L19.800 179.500Z" fill="#e8e8e8"/>
<path d="M3.500 223V757L0 760.500" stroke="#000" stroke-width="1.200" fill="none"/>
<path d="M0 189H24Q28 189 28 193V218L25.500 223H0Z" fill="#e8e8e8"/><path d="M22 189H24Q28 189 28 193V218L25.500 223H3" stroke="#000" stroke-width="1.200" fill="none"/>
<path d="M1 196V215" stroke="#a0a0a0" stroke-width="1.500" stroke-dasharray="2 1.500"/>
<path d="M4 224.5 H23Q26.500 224.5 26.500 228V245.5L24 250H4Z" fill="#e8e8e8"/><path d="M4 225H23" stroke="#fff" stroke-width="1"/><path d="M23 224.5Q26.500 224.5 26.500 228V245.5L24 250H3.500" fill="none" stroke="#000" stroke-width="1.200"/>
<path d="M4 254 H23Q26.500 254 26.500 257.5V275.5L24 280H4Z" fill="#e8e8e8"/><path d="M4 254.5H23" stroke="#fff" stroke-width="1"/><path d="M23 254Q26.500 254 26.500 257.5V275.5L24 280H3.500" fill="none" stroke="#000" stroke-width="1.200"/>
<path d="M4 283.5 H23Q26.500 283.5 26.500 287V305L24 309.5H4Z" fill="#e8e8e8"/><path d="M4 284H23" stroke="#fff" stroke-width="1"/><path d="M23 283.5Q26.500 283.5 26.500 287V305L24 309.5H3.500" fill="none" stroke="#000" stroke-width="1.200"/>
<path d="M4 313.5 H23Q26.500 313.5 26.500 317V335L24 339.5H4Z" fill="#e8e8e8"/><path d="M4 314H23" stroke="#fff" stroke-width="1"/><path d="M23 313.5Q26.500 313.5 26.500 317V335L24 339.5H3.500" fill="none" stroke="#000" stroke-width="1.200"/>
<path d="M4 343 H23Q26.500 343 26.500 346.5V365.5L24 370H4Z" fill="#e8e8e8"/><path d="M4 343.5H23" stroke="#fff" stroke-width="1"/><path d="M23 343Q26.500 343 26.500 346.5V365.5L24 370H3.500" fill="none" stroke="#000" stroke-width="1.200"/>
<g fill="none" stroke="#808080" stroke-width="1"><rect x="6.500" y="195.500" width="4" height="3" fill="#fff"/><path d="M8.500 198.500V211.500H12M8.500 205.500H12"/><rect x="12.500" y="203.500" width="4" height="3" fill="#fff"/><rect x="12.500" y="209.500" width="4" height="3" fill="#fff"/></g><circle cx="16.500" cy="206.500" r="3.800" fill="#dfe8f8" stroke="#4868b8" stroke-width="1.200"/><path d="M19.500 210L22.500 213.500" stroke="#c07818" stroke-width="2.200"/>
<g fill="#f4f4f4" stroke="#808080" stroke-width="1"><rect x="13.500" y="229.500" width="5" height="3.500"/><rect x="18.500" y="235.500" width="4" height="3"/><rect x="18.500" y="240.500" width="4" height="3"/><path d="M16 233V245" fill="none"/></g><g fill="#707070"><rect x="6" y="237" width="4" height="9" rx="1"/><rect x="11" y="237" width="4" height="9" rx="1"/><rect x="7" y="234" width="2" height="3"/><rect x="12" y="234" width="2" height="3"/></g>
<g stroke="#4060a8" stroke-width="1.300" fill="none"><path d="M6 262H11M6 267H11M6 272H11M11 262V272M11 267H16M16 263V272M16 263H22M16 267.500H22M16 272H22"/></g><g fill="#4060a8"><rect x="5" y="260.500" width="3" height="3"/><rect x="5" y="265.500" width="3" height="3"/><rect x="5" y="270.500" width="3" height="3"/><rect x="19" y="261.500" width="3.500" height="3"/><rect x="19" y="266" width="3.500" height="3"/><rect x="19" y="270.500" width="3.500" height="3"/></g>
<path d="M10 291H16Q21.500 291 21.500 296.500Q21.500 302 16 302H10Z" fill="#909090" stroke="#505050" stroke-width="1.200"/><path d="M5 294H10M5 299.500H10M21.500 296.500H24" stroke="#505050" stroke-width="1.300"/>
<rect x="6" y="319" width="16" height="9" fill="#38a838"/><path d="M6 323H8V320H11V323H14V320H17V323H20V320H22" stroke="#c8f0c8" stroke-width="0.800" fill="none" stroke-dasharray="1 1"/><circle cx="14" cy="330" r="4.500" fill="#4868b0" stroke="#304890" stroke-width="0.800"/><text x="14" y="333" font-size="7" font-weight="bold" fill="#fff" text-anchor="middle" font-family="Liberation Sans">?</text>
<path d="M8.500 348V360M20.500 348V360" stroke="#d02020" stroke-width="1.300"/><path d="M10 351L14 354.500L10 358ZM19 351L15 354.500L19 358Z" fill="#5070c0" stroke="#3050a0" stroke-width="0.600"/><path d="M7 366V362H10V366H13V362H16V366H19V362H22V366" stroke="#20a020" stroke-width="1.500" fill="none"/>
</svg>
</div>
<div class="a" style="left:31px;top:164px;width:4px;height:599px;background:#e4e4e4"></div>
<div id="namep" class="a" style="left:35px;top:213px;width:175px;height:529px;background:#000;overflow:hidden">
<div class="a" style="left:0;top:0;width:175px;height:20px;background:#a8a8a8;border-top:1px solid #b8b8b8"></div>
<div class="t" style="left:3px;top:3px;font-size:12.5px;letter-spacing:-0.548px">Name</div>
<svg style="left:153px;top:4px" width="20" height="12" viewBox="0 0 20 12"><g fill="#111"><circle cx="5" cy="6" r="3.6"/><g stroke="#111" stroke-width="2"><path d="M5 0.800V11.200M-0.200 6H10.200M1.300 2.300L8.700 9.700M8.700 2.300L1.300 9.700"/></g><circle cx="5" cy="6" r="1.500" fill="#a8a8a8"/><path d="M12 4H19L15.500 8Z"/></g></svg>
<div class="a" style="left:0;top:388px;width:175px;height:137px;background:#ffffc0"></div>
<div class="a" style="left:0;top:524px;width:175px;height:2px;background:#e80000"></div>
<svg style="left:13px;top:521px" width="8" height="4" viewBox="0 0 8 4"><path d="M0 4L4 0L8 4Z" fill="#e80000"/></svg>
<div class="a" style="left:9px;top:89px;width:0;height:299px;border-left:1px dotted #e0e0e0"></div>
<div class="a" style="left:9px;top:388px;width:0;height:69px;border-left:1px dotted #b0b0a0"></div>
<div class="a" style="left:9px;top:89px;width:14px;height:0;border-top:1px dotted #e0e0e0"></div>
<svg style="left:23px;top:83px" width="16" height="12" viewBox="0 0 16 12"><rect x="0" y="4" width="2" height="4" fill="#f0e000"/><rect x="14" y="4" width="2" height="4" fill="#f0e000"/><rect x="2.500" y="0.500" width="11" height="11" fill="#7890c8" stroke="#5068a8"/><rect x="3" y="9" width="10" height="2" fill="#6078b8"/><path d="M4 7.500H6.500V3.500H9.500V7.500H12" stroke="#fff" stroke-width="1" fill="none"/></svg>
<div class="t" style="left:45px;top:82px;font-size:11px;letter-spacing:-0.389px;color:#fff">CLK_REF</div>
<div class="a" style="left:9px;top:231px;width:14px;height:0;border-top:1px dotted #e0e0e0"></div>
<svg style="left:23px;top:225px" width="16" height="12" viewBox="0 0 16 12"><rect x="0" y="4" width="2" height="4" fill="#f0e000"/><rect x="14" y="4" width="2" height="4" fill="#f0e000"/><rect x="2.500" y="0.500" width="11" height="11" fill="#7890c8" stroke="#5068a8"/><rect x="3" y="9" width="10" height="2" fill="#6078b8"/><path d="M4 7.500H6.500V3.500H9.500V7.500H12" stroke="#fff" stroke-width="1" fill="none"/></svg>
<div class="t" style="left:45px;top:224px;font-size:11px;letter-spacing:-0.310px;color:#fff">VCO_CLK</div>
<div class="a" style="left:9px;top:347px;width:14px;height:0;border-top:1px dotted #e0e0e0"></div>
<svg style="left:23px;top:341px" width="16" height="12" viewBox="0 0 16 12"><rect x="0" y="4" width="2" height="4" fill="#f0e000"/><rect x="14" y="4" width="2" height="4" fill="#f0e000"/><rect x="2.500" y="0.500" width="11" height="11" fill="#7890c8" stroke="#5068a8"/><rect x="3" y="9" width="10" height="2" fill="#6078b8"/><path d="M4 7.500H6.500V3.500H9.500V7.500H12" stroke="#fff" stroke-width="1" fill="none"/></svg>
<div class="t" style="left:45px;top:340px;font-size:11px;letter-spacing:-0.134px;color:#fff">CLK_160MHZ</div>
<div class="a" style="left:9px;top:457px;width:14px;height:0;border-top:1px dotted #b0b0a0"></div>
<svg style="left:23px;top:451px" width="16" height="12" viewBox="0 0 16 12"><rect x="0" y="4" width="2" height="4" fill="#f0e000"/><rect x="14" y="4" width="2" height="4" fill="#f0e000"/><rect x="2.500" y="0.500" width="11" height="11" fill="#7890c8" stroke="#5068a8"/><rect x="3" y="9" width="10" height="2" fill="#6078b8"/><path d="M4 7.500H6.500V3.500H9.500V7.500H12" stroke="#fff" stroke-width="1" fill="none"/></svg>
<div class="t" style="left:45px;top:450px;font-size:11px;letter-spacing:-0.359px;color:#000">vCNTL</div>
</div>
<div id="curp" class="a" style="left:216px;top:213px;width:75px;height:529px;background:#000;overflow:hidden">
<div class="a" style="left:0;top:0;width:75px;height:20px;background:#a8a8a8;border-top:1px solid #b8b8b8"></div>
<div class="t" style="left:3px;top:3px;font-size:12.5px;letter-spacing:-0.063px">Cursor</div>
<svg style="left:53px;top:4px" width="20" height="12" viewBox="0 0 20 12"><g fill="#111"><circle cx="5" cy="6" r="3.6"/><g stroke="#111" stroke-width="2"><path d="M5 0.800V11.200M-0.200 6H10.200M1.300 2.300L8.700 9.700M8.700 2.300L1.300 9.700"/></g><circle cx="5" cy="6" r="1.500" fill="#a8a8a8"/><path d="M12 4H19L15.500 8Z"/></g></svg>
<div class="a" style="left:0;top:388px;width:75px;height:138px;background:#ffffc0"></div>
<div class="m" style="left:3px;top:83px;color:#fff">2.5 <span style="font-size:8px">V</span></div>
<svg style="left:56px;top:84px" width="14" height="10" viewBox="0 0 14 10"><path d="M0 4.500H11" stroke="#ff0000" stroke-width="1.200"/><g stroke="#fff" fill="none"><path d="M1.500 3V1.500H3.500M8 1.500H10.500V3M1.500 6.500V8.500H3.500M8 8.500H10.500V6.500"/><path d="M12 0V10" stroke-width="2" stroke-dasharray="1 1"/><path d="M11.500 0V10" stroke-width="1"/></g></svg>
<div class="m" style="left:3px;top:225px;color:#fff">1.06082&#9656;</div>
<svg style="left:56px;top:226px" width="14" height="10" viewBox="0 0 14 10"><path d="M0 4.500H11" stroke="#ffc400" stroke-width="1.200"/><g stroke="#fff" fill="none"><path d="M1.500 3V1.500H3.500M8 1.500H10.500V3M1.500 6.500V8.500H3.500M8 8.500H10.500V6.500"/><path d="M12 0V10" stroke-width="2" stroke-dasharray="1 1"/><path d="M11.500 0V10" stroke-width="1"/></g></svg>
<div class="m" style="left:3px;top:341px;color:#fff">2.5 <span style="font-size:8px">V</span></div>
<svg style="left:56px;top:342px" width="14" height="10" viewBox="0 0 14 10"><path d="M0 4.500H11" stroke="#7cff00" stroke-width="1.200"/><g stroke="#fff" fill="none"><path d="M1.500 3V1.500H3.500M8 1.500H10.500V3M1.500 6.500V8.500H3.500M8 8.500H10.500V6.500"/><path d="M12 0V10" stroke-width="2" stroke-dasharray="1 1"/><path d="M11.500 0V10" stroke-width="1"/></g></svg>
<div class="m" style="left:3px;top:452px;color:#000">1.29176&#9646;</div>
<svg style="left:56px;top:453px" width="14" height="10" viewBox="0 0 14 10"><rect x="0" y="0" width="14" height="10" fill="#222"/><path d="M1 4.500H11" stroke="#00ff50" stroke-width="1.500"/><g stroke="#fff" fill="none"><path d="M1.500 3V1.500H3M8 1.500H10.500V3M1.500 7V8.500H3M8 8.500H10.500V7"/><path d="M12.500 0V10" stroke-dasharray="1 1"/></g></svg>
</div>
<div id="info" class="a" style="left:31px;top:164px;width:266px;height:50px">
<svg style="left:5px;top:10px" width="14" height="14" viewBox="0 0 14 14"><rect x="0.500" y="0.500" width="13" height="13" fill="#e8e8e8" stroke="#fff"/><path d="M0.500 13.500H13.500V0.500" stroke="#909090" fill="none"/><circle cx="6.500" cy="6.500" r="4.500" fill="#dfe6f5" stroke="#4060b0" stroke-width="1.300"/><path d="M4.500 4H9V7H5.500V10" stroke="#c02020" stroke-width="1.600" fill="none"/><rect x="5" y="4" width="4" height="3" fill="#d03030"/><path d="M9.500 9.500L12 12" stroke="#c07010" stroke-width="2.200"/></svg>
<svg style="left:5px;top:25px" width="14" height="14" viewBox="0 0 14 14"><rect x="0.500" y="0.500" width="13" height="13" fill="#e8e8e8" stroke="#fff"/><path d="M0.500 13.500H13.500V0.500" stroke="#909090" fill="none"/><path d="M2 2.500V11.500M9 2.500V11.500" stroke="#c02020" stroke-width="1.300"/><rect x="2" y="2.500" width="4" height="3" fill="#d03030"/><rect x="9" y="2.500" width="3.500" height="3" fill="#d03030"/><path d="M2 8.500H9" stroke="#333" stroke-width="1"/></svg>
<div class="t" style="left:57px;top:9px;font-size:10.500px;letter-spacing:-0.554px">Baseline</div>
<div class="t" style="left:103px;top:9px;font-size:10.500px">= 0</div>
<div class="t" style="left:21px;top:24px;font-size:10.500px;letter-spacing:-0.199px">Cursor-Baseline</div>
<svg style="left:94px;top:29px" width="8" height="5" viewBox="0 0 8 5"><path d="M0 0H8L4 4.500Z" fill="#000"/></svg>
<div class="t" style="left:103px;top:24px;font-size:10.500px;letter-spacing:0.027px">= 9,964,874.3488432ps</div>
</div>
<div id="wave" class="a" style="left:297px;top:164px;width:717px;height:578px;background:#000;overflow:hidden">
<div class="a" style="left:0px;top:68px;width:717px;height:1px;background:#e8e8e8;"></div>
<div class="a" style="left:1px;top:71px;width:716px;height:132px;background:#ff0000;"></div>
<div class="a" style="left:705px;top:71px;width:10px;height:132px;background:#800000;"></div>
<div class="a" style="left:715px;top:71px;width:2px;height:132px;background:#000;"></div>
<div class="a" style="left:2px;top:71px;width:1px;height:132px;background:#b8b8b8;"></div>
<div class="a" style="left:3px;top:203px;width:7px;height:1px;background:#d0d0d0;"></div>
<div class="t" style="left:12.5px;top:197px;color:#c8c8c8;letter-spacing:-0.3px">0</div>
<div class="a" style="left:3px;top:192px;width:3px;height:1px;background:#d0d0d0;"></div>
<div class="a" style="left:3px;top:182px;width:3px;height:1px;background:#d0d0d0;"></div>
<div class="a" style="left:3px;top:171px;width:3px;height:1px;background:#d0d0d0;"></div>
<div class="a" style="left:3px;top:161px;width:3px;height:1px;background:#d0d0d0;"></div>
<div class="a" style="left:3px;top:150px;width:7px;height:1px;background:#d0d0d0;"></div>
<div class="t" style="left:12.5px;top:144px;color:#c8c8c8;letter-spacing:-0.3px">1</div>
<div class="a" style="left:3px;top:139px;width:3px;height:1px;background:#d0d0d0;"></div>
<div class="a" style="left:3px;top:129px;width:3px;height:1px;background:#d0d0d0;"></div>
<div class="a" style="left:3px;top:118px;width:3px;height:1px;background:#d0d0d0;"></div>
<div class="a" style="left:3px;top:108px;width:3px;height:1px;background:#d0d0d0;"></div>
<div class="a" style="left:3px;top:97px;width:7px;height:1px;background:#d0d0d0;"></div>
<div class="t" style="left:12.5px;top:91px;color:#c8c8c8;letter-spacing:-0.3px">2</div>
<div class="a" style="left:3px;top:86px;width:3px;height:1px;background:#d0d0d0;"></div>
<div class="a" style="left:3px;top:76px;width:3px;height:1px;background:#d0d0d0;"></div>
<div class="t" style="left:-297px;top:71px;left:auto;right:14px;color:#c8c8c8;letter-spacing:-0.206px">2.5V</div>
<div class="t" style="left:-297px;top:189px;left:auto;right:14px;color:#c8c8c8;letter-spacing:0.103px">0V</div>
<svg style="left:705px;top:71px" width="10" height="132" viewBox="0 0 10 132">
<g transform="translate(0,0)">
<path d="M1 6L5 1.500L9 6Z" fill="#c0c0c0"/>
</g><path d="M1 125L5 129.5L9 125Z" fill="#c0c0c0"/><g transform="translate(0,0)">
<g stroke="#c0c0c0" stroke-width="1" fill="none"><path d="M1 20.5H9M5 16V25"/><path d="M3.500 17.5L5 16L6.500 17.5M3.500 23.5L5 25L6.500 23.5M2.500 19L1 20.5L2.500 22M7.500 19L9 20.5L7.500 22"/>
<rect x="1.500" y="27.5" width="8" height="8"/><rect x="3.500" y="29.5" width="4" height="4" fill="#c0c0c0"/>
<circle cx="4.500" cy="42" r="3"/><path d="M1.500 42H7.500M4.500 39V45"/><path d="M6.500 44L9.500 47" stroke-width="1.800"/>
<circle cx="4.500" cy="53" r="3"/><path d="M1.500 53H7.500"/><path d="M6.500 55L9.500 58" stroke-width="1.800"/>
</g></g></svg>
<div class="a" style="left:1px;top:208px;width:716px;height:143px;background:#ffc400;"></div>
<div class="a" style="left:705px;top:208px;width:10px;height:143px;background:#806200;"></div>
<div class="a" style="left:715px;top:208px;width:2px;height:143px;background:#000;"></div>
<div class="a" style="left:2px;top:208px;width:1px;height:143px;background:#b8b8b8;"></div>
<div class="a" style="left:3px;top:350px;width:7px;height:1px;background:#d8b048;"></div>
<div class="t" style="left:12.5px;top:344px;color:#d8b048;letter-spacing:-0.3px">0</div>
<div class="a" style="left:3px;top:338px;width:3px;height:1px;background:#d8b048;"></div>
<div class="a" style="left:3px;top:327px;width:3px;height:1px;background:#d8b048;"></div>
<div class="a" style="left:3px;top:316px;width:3px;height:1px;background:#d8b048;"></div>
<div class="a" style="left:3px;top:305px;width:3px;height:1px;background:#d8b048;"></div>
<div class="a" style="left:3px;top:294px;width:7px;height:1px;background:#d8b048;"></div>
<div class="t" style="left:12.5px;top:288px;color:#d8b048;letter-spacing:-0.3px">1</div>
<div class="a" style="left:3px;top:283px;width:3px;height:1px;background:#d8b048;"></div>
<div class="a" style="left:3px;top:271px;width:3px;height:1px;background:#d8b048;"></div>
<div class="a" style="left:3px;top:260px;width:3px;height:1px;background:#d8b048;"></div>
<div class="a" style="left:3px;top:249px;width:3px;height:1px;background:#d8b048;"></div>
<div class="a" style="left:3px;top:238px;width:7px;height:1px;background:#d8b048;"></div>
<div class="t" style="left:12.5px;top:232px;color:#d8b048;letter-spacing:-0.3px">2</div>
<div class="a" style="left:3px;top:227px;width:3px;height:1px;background:#d8b048;"></div>
<div class="a" style="left:3px;top:215px;width:3px;height:1px;background:#d8b048;"></div>
<div class="t" style="left:-297px;top:207px;left:auto;right:14px;color:#d8b048;letter-spacing:-0.062px">2.55132V</div>
<div class="t" style="left:-297px;top:337px;left:auto;right:14px;color:#d8b048;letter-spacing:0.101px">-0.0365707V</div>
<svg style="left:705px;top:208px" width="10" height="143" viewBox="0 0 10 143">
<g transform="translate(0,-1)">
<path d="M1 6L5 1.500L9 6Z" fill="#c0c0c0"/>
</g><path d="M1 136L5 140.5L9 136Z" fill="#c0c0c0"/><g transform="translate(0,-1)">
<g stroke="#c0c0c0" stroke-width="1" fill="none"><path d="M1 20.5H9M5 16V25"/><path d="M3.500 17.5L5 16L6.500 17.5M3.500 23.5L5 25L6.500 23.5M2.500 19L1 20.5L2.500 22M7.500 19L9 20.5L7.500 22"/>
<rect x="1.500" y="27.5" width="8" height="8"/><rect x="3.500" y="29.5" width="4" height="4" fill="#c0c0c0"/>
<circle cx="4.500" cy="42" r="3"/><path d="M1.500 42H7.500M4.500 39V45"/><path d="M6.500 44L9.500 47" stroke-width="1.800"/>
<circle cx="4.500" cy="53" r="3"/><path d="M1.500 53H7.500"/><path d="M6.500 55L9.500 58" stroke-width="1.800"/>
</g></g></svg>
<div class="a" style="left:1px;top:355px;width:716px;height:80px;background:#7cff00;"></div>
<div class="a" style="left:705px;top:355px;width:10px;height:80px;background:#000000;"></div>
<div class="a" style="left:715px;top:355px;width:2px;height:80px;background:#000;"></div>
<div class="a" style="left:2px;top:355px;width:1px;height:80px;background:#b8b8b8;"></div>
<div class="a" style="left:3px;top:434px;width:7px;height:1px;background:#a8d860;"></div>
<div class="t" style="left:12.5px;top:428px;color:#a8d860;letter-spacing:-0.3px">0</div>
<div class="a" style="left:3px;top:428px;width:3px;height:1px;background:#a8d860;"></div>
<div class="a" style="left:3px;top:422px;width:3px;height:1px;background:#a8d860;"></div>
<div class="a" style="left:3px;top:415px;width:3px;height:1px;background:#a8d860;"></div>
<div class="a" style="left:3px;top:409px;width:3px;height:1px;background:#a8d860;"></div>
<div class="a" style="left:3px;top:403px;width:7px;height:1px;background:#a8d860;"></div>
<div class="t" style="left:12.5px;top:397px;color:#a8d860;letter-spacing:-0.3px">1</div>
<div class="a" style="left:3px;top:396px;width:3px;height:1px;background:#a8d860;"></div>
<div class="a" style="left:3px;top:390px;width:3px;height:1px;background:#a8d860;"></div>
<div class="a" style="left:3px;top:384px;width:3px;height:1px;background:#a8d860;"></div>
<div class="a" style="left:3px;top:377px;width:3px;height:1px;background:#a8d860;"></div>
<div class="a" style="left:3px;top:371px;width:7px;height:1px;background:#a8d860;"></div>
<div class="t" style="left:12.5px;top:365px;color:#a8d860;letter-spacing:-0.3px">2</div>
<div class="a" style="left:3px;top:365px;width:3px;height:1px;background:#a8d860;"></div>
<div class="a" style="left:3px;top:358px;width:3px;height:1px;background:#a8d860;"></div>
<div class="t" style="left:-297px;top:355px;left:auto;right:14px;color:#a8d860;letter-spacing:-0.062px">2.51746V</div>
<div class="t" style="left:-297px;top:421px;left:auto;right:14px;color:#a8d860;letter-spacing:0.101px">-0.0156377V</div>
<svg style="left:705px;top:355px" width="10" height="80" viewBox="0 0 10 80">
<g transform="translate(0,0)">
<path d="M1 6L5 1.500L9 6Z" fill="#c0c0c0"/>
</g><path d="M1 73L5 77.5L9 73Z" fill="#c0c0c0"/><g transform="translate(0,0)">
<g stroke="#c0c0c0" stroke-width="1" fill="none"><path d="M1 20.5H9M5 16V25"/><path d="M3.500 17.5L5 16L6.500 17.5M3.500 23.5L5 25L6.500 23.5M2.500 19L1 20.5L2.500 22M7.500 19L9 20.5L7.500 22"/>
<rect x="1.500" y="27.5" width="8" height="8"/><rect x="3.500" y="29.5" width="4" height="4" fill="#c0c0c0"/>
<circle cx="4.500" cy="42" r="3"/><path d="M1.500 42H7.500M4.500 39V45"/><path d="M6.500 44L9.500 47" stroke-width="1.800"/>
<circle cx="4.500" cy="53" r="3"/><path d="M1.500 53H7.500"/><path d="M6.500 55L9.500 58" stroke-width="1.800"/>
</g></g></svg>
<div class="a" style="left:1px;top:437px;width:716px;height:138px;background:#333333;"></div>
<div class="a" style="left:705px;top:437px;width:10px;height:138px;background:#333333;"></div>
<div class="a" style="left:715px;top:437px;width:2px;height:138px;background:#000;"></div>
<div class="a" style="left:2px;top:437px;width:1px;height:138px;background:#b8b8b8;"></div>
<div class="a" style="left:3px;top:572px;width:7px;height:1px;background:#c8c8c8;"></div>
<div class="t" style="left:12.5px;top:566px;color:#c8c8c8;letter-spacing:-0.3px">0</div>
<div class="a" style="left:3px;top:564px;width:3px;height:1px;background:#c8c8c8;"></div>
<div class="a" style="left:3px;top:556px;width:3px;height:1px;background:#c8c8c8;"></div>
<div class="a" style="left:3px;top:547px;width:3px;height:1px;background:#c8c8c8;"></div>
<div class="a" style="left:3px;top:539px;width:3px;height:1px;background:#c8c8c8;"></div>
<div class="a" style="left:3px;top:531px;width:7px;height:1px;background:#c8c8c8;"></div>
<div class="t" style="left:12.5px;top:525px;color:#c8c8c8;letter-spacing:-0.3px">0.5</div>
<div class="a" style="left:3px;top:523px;width:3px;height:1px;background:#c8c8c8;"></div>
<div class="a" style="left:3px;top:515px;width:3px;height:1px;background:#c8c8c8;"></div>
<div class="a" style="left:3px;top:507px;width:3px;height:1px;background:#c8c8c8;"></div>
<div class="a" style="left:3px;top:499px;width:3px;height:1px;background:#c8c8c8;"></div>
<div class="a" style="left:3px;top:491px;width:7px;height:1px;background:#c8c8c8;"></div>
<div class="t" style="left:12.5px;top:485px;color:#c8c8c8;letter-spacing:-0.3px">1</div>
<div class="a" style="left:3px;top:483px;width:3px;height:1px;background:#c8c8c8;"></div>
<div class="a" style="left:3px;top:475px;width:3px;height:1px;background:#c8c8c8;"></div>
<div class="a" style="left:3px;top:467px;width:3px;height:1px;background:#c8c8c8;"></div>
<div class="a" style="left:3px;top:458px;width:3px;height:1px;background:#c8c8c8;"></div>
<div class="a" style="left:3px;top:450px;width:7px;height:1px;background:#c8c8c8;"></div>
<div class="t" style="left:12.5px;top:444px;color:#c8c8c8;letter-spacing:-0.3px">1.5</div>
<div class="a" style="left:3px;top:442px;width:3px;height:1px;background:#c8c8c8;"></div>
<div class="t" style="left:-297px;top:439px;left:auto;right:14px;color:#c8c8c8;letter-spacing:-0.062px">1.64631V</div>
<div class="t" style="left:-297px;top:559px;left:auto;right:14px;color:#c8c8c8;letter-spacing:0.101px">-0.0219774V</div>
<svg style="left:705px;top:437px" width="10" height="138" viewBox="0 0 10 138">
<g transform="translate(0,2)">
<path d="M1 6L5 1.500L9 6Z" fill="#c0c0c0"/>
</g><path d="M1 131L5 135.5L9 131Z" fill="#c0c0c0"/><g transform="translate(0,2)">
<g stroke="#c0c0c0" stroke-width="1" fill="none"><path d="M1 20.5H9M5 16V25"/><path d="M3.500 17.5L5 16L6.500 17.5M3.500 23.5L5 25L6.500 23.5M2.500 19L1 20.5L2.500 22M7.500 19L9 20.5L7.500 22"/>
<rect x="1.500" y="27.5" width="8" height="8"/><rect x="3.500" y="29.5" width="4" height="4" fill="#c0c0c0"/>
<circle cx="4.500" cy="42" r="3"/><path d="M1.500 42H7.500M4.500 39V45"/><path d="M6.500 44L9.500 47" stroke-width="1.800"/>
<circle cx="4.500" cy="53" r="3"/><path d="M1.500 53H7.500"/><path d="M6.500 55L9.500 58" stroke-width="1.800"/>
</g></g></svg>
<div class="a" style="left:1px;top:203px;width:716px;height:5px;background:#000;"></div>
<div class="a" style="left:1px;top:351px;width:716px;height:4px;background:#000;"></div>
<div class="a" style="left:1px;top:435px;width:716px;height:2px;background:#000;"></div>
<div class="a" style="left:1px;top:575px;width:716px;height:3px;background:#000;"></div>
<div class="a" style="left:1px;top:208px;width:48px;height:1px;background:#000;"></div>
<svg style="left:1px;top:199px" width="18" height="13" viewBox="0 0 18 13"><path d="M0 5.500H17.500V7.500H0" fill="none" stroke="#000" stroke-width="1"/><path d="M0 6.500H17" stroke="#ff0000" stroke-width="1"/><path d="M4 5L8 1L12 5Z" fill="#ff0000" stroke="#000" stroke-width="0.700"/><path d="M4 8L8 12L12 8Z" fill="#ff0000" stroke="#000" stroke-width="0.700"/><path d="M5.300 6.500H10.700" stroke="#202828" stroke-width="1"/></svg>
<svg style="left:1px;top:347px" width="18" height="13" viewBox="0 0 18 13"><path d="M0 5.500H17.500V7.500H0" fill="none" stroke="#000" stroke-width="1"/><path d="M0 6.500H17" stroke="#ff0000" stroke-width="1"/><path d="M4 5L8 1L12 5Z" fill="#ff0000" stroke="#000" stroke-width="0.700"/><path d="M4 8L8 12L12 8Z" fill="#ff0000" stroke="#000" stroke-width="0.700"/><path d="M5.300 6.500H10.700" stroke="#202828" stroke-width="1"/></svg>
<svg style="left:1px;top:431px" width="18" height="13" viewBox="0 0 18 13"><path d="M0 5.500H17.500V7.500H0" fill="none" stroke="#000" stroke-width="1"/><path d="M0 6.500H17" stroke="#ff0000" stroke-width="1"/><path d="M4 5L8 1L12 5Z" fill="#ff0000" stroke="#000" stroke-width="0.700"/><path d="M4 8L8 12L12 8Z" fill="#ff0000" stroke="#000" stroke-width="0.700"/><path d="M5.300 6.500H10.700" stroke="#202828" stroke-width="1"/></svg>
<svg style="left:1px;top:569px" width="18" height="13" viewBox="0 0 18 13"><path d="M0 5.500H17.500V7.500H0" fill="none" stroke="#000" stroke-width="1"/><path d="M0 6.500H17" stroke="#ff0000" stroke-width="1"/><path d="M4 5L8 1L12 5Z" fill="#ff0000" stroke="#000" stroke-width="0.700"/><path d="M4 8L8 12L12 8Z" fill="#ff0000" stroke="#000" stroke-width="0.700"/><path d="M5.300 6.500H10.700" stroke="#202828" stroke-width="1"/></svg>
<div class="a" style="left:1px;top:17px;width:1px;height:54px;background:#ff0000;"></div>
<div class="a" style="left:1px;top:207px;width:1px;height:2px;background:#ff0000;"></div>
<div class="a" style="left:1px;top:354px;width:1px;height:2px;background:#ff0000;"></div>
<div class="a" style="left:1px;top:435px;width:1px;height:143px;background:#ff0000;"></div>
<div class="a" style="left:357px;top:34px;width:1px;height:544px;background:#ff0000;"></div>
<div class="a" style="left:37px;top:66px;width:1px;height:2px;background:#e8e8e8;"></div>
<div class="a" style="left:72px;top:66px;width:1px;height:2px;background:#e8e8e8;"></div>
<div class="a" style="left:108px;top:66px;width:1px;height:2px;background:#e8e8e8;"></div>
<div class="a" style="left:144px;top:66px;width:1px;height:2px;background:#e8e8e8;"></div>
<div class="a" style="left:180px;top:50px;width:1px;height:18px;background:#e8e8e8;"></div>
<div class="a" style="left:215px;top:66px;width:1px;height:2px;background:#e8e8e8;"></div>
<div class="a" style="left:251px;top:66px;width:1px;height:2px;background:#e8e8e8;"></div>
<div class="a" style="left:287px;top:66px;width:1px;height:2px;background:#e8e8e8;"></div>
<div class="a" style="left:322px;top:66px;width:1px;height:2px;background:#e8e8e8;"></div>
<div class="a" style="left:358px;top:50px;width:1px;height:18px;background:#e8e8e8;"></div>
<div class="a" style="left:394px;top:66px;width:1px;height:2px;background:#e8e8e8;"></div>
<div class="a" style="left:429px;top:66px;width:1px;height:2px;background:#e8e8e8;"></div>
<div class="a" style="left:465px;top:66px;width:1px;height:2px;background:#e8e8e8;"></div>
<div class="a" style="left:501px;top:66px;width:1px;height:2px;background:#e8e8e8;"></div>
<div class="a" style="left:537px;top:50px;width:1px;height:18px;background:#e8e8e8;"></div>
<div class="a" style="left:572px;top:66px;width:1px;height:2px;background:#e8e8e8;"></div>
<div class="a" style="left:608px;top:66px;width:1px;height:2px;background:#e8e8e8;"></div>
<div class="a" style="left:644px;top:66px;width:1px;height:2px;background:#e8e8e8;"></div>
<div class="a" style="left:679px;top:66px;width:1px;height:2px;background:#e8e8e8;"></div>
<div class="a" style="left:715px;top:50px;width:1px;height:18px;background:#e8e8e8;"></div>
<div class="a" style="left:1px;top:17px;width:76px;height:16px;background:#ff0000;border:1px solid #ff6060"></div>
<div class="t w" style="left:4px;top:18px;letter-spacing:0.068px">Baseline = 0</div>
<div class="a" style="left:357px;top:34px;width:178px;height:16px;background:#ff0000;border:1px solid #ff6060"></div>
<div class="t w" style="left:360.5px;top:35px;letter-spacing:0.048px">TimeA = 9,964,874.3488432ps</div>
<div class="t w" style="left:4px;top:50px;">0</div>
<div class="t w" style="left:183px;top:50px;letter-spacing:-0.021px">5,000,000ps</div>
<div class="t w" style="left:359.5px;top:50px;letter-spacing:0.121px">10,000,000ps</div>
<div class="t w" style="left:539px;top:50px;letter-spacing:0.085px">15,000,000ps</div>
<svg style="left:0;top:0" width="717" height="578" viewBox="297 167 717 578"><path d="M298.0 739.0 L305.0 739.0 L306.0 733.0 L307.0 728.5 L308.0 731.0 L309.0 737.0 L311.5 737.5 L312.0 712.0 L312.6 690.0 L314.0 676.0 L316.0 664.0 L318.0 657.0 L320.0 652.5 L321.0 655.0 L322.0 664.0 L323.5 682.0 L325.0 700.0 L326.0 705.5 L327.0 701.0 L328.5 680.0 L330.0 660.0 L332.0 642.0 L333.5 636.0 L334.2 635.5 L335.0 639.0 L336.5 658.0 L338.0 678.0 L339.5 692.0 L340.2 693.5 L341.0 688.0 L342.5 668.0 L344.0 648.0 L345.5 634.0 L346.9 629.0 L347.4 653.7 L353.8 621.3 L354.6 648.0 L360.6 614.7 L361.7 651.8 L367.5 610.8 L368.9 654.0 L374.4 608.6 L376.1 654.0 L381.3 606.8 L383.3 652.7 L388.2 606.0 L390.5 651.9 L395.1 605.9 L397.7 650.5 L402.0 606.1 L404.9 648.7 L409.0 606.6 L412.2 646.7 L415.9 607.5 L419.4 644.8 L422.9 609.1 L426.7 643.7 L429.9 610.7 L434.0 642.4 L436.9 612.8 L441.3 641.3 L443.9 614.6 L448.6 640.4 L450.9 616.4 L455.9 639.8 L457.9 617.9 L463.2 639.2 L465.0 619.5 L470.4 638.6 L472.0 621.0 L477.4 638.1 L479.1 622.2 L484.5 637.7 L486.2 623.4 L491.6 637.2 L493.3 624.7 L498.7 636.7 L500.4 625.9 L505.8 636.3 L507.5 626.9 L512.9 636.1 L514.6 627.5 L520.0 635.8 L521.7 628.2 L527.1 635.6 L528.9 628.8 L534.3 635.4 L536.0 629.4 L541.4 635.2 L543.1 630.1 L548.5 635.0 L550.3 630.6 L555.7 634.9 L557.4 630.8 L562.8 634.8 L564.5 631.0 L569.9 634.6 L571.7 631.2 L577.1 634.5 L578.8 631.5 L584.2 634.4 L585.9 631.7 L591.3 634.3 L593.0 631.8 L598.4 634.3 L600.2 631.9 L605.6 634.2 L607.3 632.0 L612.7 634.2 L614.4 632.1 L619.8 634.2 L621.6 632.2 L627.0 634.1 L628.7 632.3 L634.1 634.1 L635.8 632.4 L641.2 634.0 L643.0 632.5 L648.4 634.0 L650.1 632.6 L655.5 634.0 L657.2 633.5" stroke="#00fc48" stroke-width="2.500" fill="none" stroke-linejoin="round" transform="translate(0,0.5)"/><rect x="600" y="633" width="402" height="2" fill="#00fc48"/></svg>
</div>
<div class="a" style="left:1014px;top:164px;width:14px;height:600px;background:#e8e8e8;"></div>
<div class="a" style="left:1014px;top:234px;width:1px;height:509px;background:#9a9a9a;"></div>
<div class="a" style="left:1015px;top:234px;width:13px;height:509px;background:#c4c4c4;"></div>
<svg style="left:1016px;top:235px" width="12" height="12" viewBox="0 0 12 12"><path d="M6 1L11 11H1Z" fill="#dcdcdc"/><path d="M1 11L6 1" stroke="#fff" stroke-width="1.300"/><path d="M6 1L11 11H1" stroke="#8c8c8c" stroke-width="1.300" fill="none"/></svg>
<div class="a" style="left:1016px;top:247px;width:12px;height:481px;background:#e6e6e6;border-top:1px solid #fff;border-left:1px solid #fff;border-right:2px solid #8c8c8c;border-bottom:2px solid #8c8c8c"></div>
<svg style="left:1016px;top:729px" width="12" height="12" viewBox="0 0 12 12"><path d="M1 1H11L6 11Z" fill="#dcdcdc"/><path d="M6 11L1 1H11" stroke="#fff" stroke-width="1.300" fill="none"/><path d="M11 1L6 11" stroke="#8c8c8c" stroke-width="1.300"/></svg>
<div class="a" style="left:1014px;top:742px;width:14px;height:22px;background:#e8e8e8;"></div>
<div class="a" style="left:31px;top:742px;width:983px;height:21px;background:#e8e8e8;"></div>
<div class="a" style="left:35px;top:742px;width:175px;height:1px;background:#8c8c8c;"></div>
<div class="a" style="left:35px;top:743px;width:175px;height:19px;background:#c4c4c4;border-left:1px solid #8c8c8c;border-bottom:1px solid #fff"></div>
<svg style="left:36px;top:743.5px" width="17" height="17" viewBox="0 0 17 17"><path d="M15.5 1.500L2 8.5L15.5 15.5Z" fill="#dcdcdc"/><path d="M15.5 1.500L2 8.5" stroke="#fff" stroke-width="1.300"/><path d="M2 8.5L15.5 15.5V1.500" stroke="#8c8c8c" stroke-width="1.300" fill="none"/></svg>
<div class="a" style="left:55px;top:744px;width:137px;height:17px;background:#e6e6e6;border-top:1px solid #fff;border-left:1px solid #fff;border-right:2px solid #8c8c8c;border-bottom:2px solid #8c8c8c"></div>
<svg style="left:192px;top:743.5px" width="17" height="17" viewBox="0 0 17 17"><path d="M1.500 1.500L15 8.5L1.500 15.5Z" fill="#dcdcdc"/><path d="M1.500 15.5V1.500L15 8.5" stroke="#fff" stroke-width="1.300" fill="none"/><path d="M15 8.5L1.500 15.5" stroke="#8c8c8c" stroke-width="1.300"/></svg>
<div class="a" style="left:216px;top:742px;width:56px;height:1px;background:#8c8c8c;"></div>
<div class="a" style="left:216px;top:743px;width:56px;height:19px;background:#c4c4c4;border-left:1px solid #8c8c8c;border-bottom:1px solid #fff"></div>
<svg style="left:217px;top:743.5px" width="16" height="17" viewBox="0 0 16 17"><path d="M14.5 1.500L2 8.5L14.5 15.5Z" fill="#dcdcdc"/><path d="M14.5 1.500L2 8.5" stroke="#fff" stroke-width="1.300"/><path d="M2 8.5L14.5 15.5V1.500" stroke="#8c8c8c" stroke-width="1.300" fill="none"/></svg>
<div class="a" style="left:236px;top:744px;width:13px;height:17px;background:#e6e6e6;border-top:1px solid #fff;border-left:1px solid #fff;border-right:2px solid #8c8c8c;border-bottom:2px solid #8c8c8c"></div>
<svg style="left:255px;top:743.5px" width="16" height="17" viewBox="0 0 16 17"><path d="M1.500 1.500L14 8.5L1.500 15.5Z" fill="#dcdcdc"/><path d="M1.500 15.5V1.500L14 8.5" stroke="#fff" stroke-width="1.300" fill="none"/><path d="M14 8.5L1.500 15.5" stroke="#8c8c8c" stroke-width="1.300"/></svg>
<div class="a" style="left:272px;top:743px;width:19px;height:19px;background:#ececec;border-top:1px solid #fff"></div>
<svg style="left:277px;top:748px" width="13" height="11" viewBox="0 0 13 11"><path d="M1 0V11M3 1.500H8M3 3.500H12M3 5.500H10M3 7.500H12M3 9.500H8" stroke="#111" stroke-width="1"/></svg>
<div class="a" style="left:297px;top:742px;width:717px;height:1px;background:#8c8c8c;"></div>
<div class="a" style="left:297px;top:743px;width:717px;height:19px;background:#c4c4c4;border-left:1px solid #8c8c8c"></div>
<svg style="left:298px;top:743.5px" width="17" height="16" viewBox="0 0 17 16"><path d="M15.5 1.500L2 8L15.5 14.5Z" fill="#dcdcdc"/><path d="M15.5 1.500L2 8" stroke="#fff" stroke-width="1.300"/><path d="M2 8L15.5 14.5V1.500" stroke="#8c8c8c" stroke-width="1.300" fill="none"/></svg>
<div class="a" style="left:316px;top:744px;width:679px;height:15px;background:#e6e6e6;border-top:1px solid #fff;border-left:1px solid #fff;border-right:2px solid #8c8c8c"></div>
<svg style="left:996px;top:743.5px" width="17" height="16" viewBox="0 0 17 16"><path d="M1.500 1.500L15 8L1.500 14.5Z" fill="#dcdcdc"/><path d="M1.500 14.5V1.500L15 8" stroke="#fff" stroke-width="1.300" fill="none"/><path d="M15 8L1.500 14.5" stroke="#8c8c8c" stroke-width="1.300"/></svg>
<div class="a" style="left:298px;top:759px;width:693px;height:1px;background:#222;background:repeating-linear-gradient(90deg,#222 0,#222 12.600px,#fff 12.600px,#fff 13.600px)"></div>
<div class="a" style="left:991px;top:759px;width:23px;height:1px;background:#fff;"></div>
<div class="a" style="left:298px;top:760px;width:716px;height:2px;background:#fff;"></div>
<svg style="left:312px;top:754px" width="11" height="8" viewBox="0 0 11 8"><path d="M1 7.500L5.500 1.500L10 7.500Z" fill="#f4f4f4" stroke="#000" stroke-width="1"/></svg>
<svg style="left:989px;top:754px" width="11" height="8" viewBox="0 0 11 8"><path d="M1 7.500L5.500 1.500L10 7.500Z" fill="#f4f4f4" stroke="#000" stroke-width="1"/></svg>
<div class="a" style="left:0px;top:763px;width:1028px;height:1px;background:#9a9a9a;"></div>
<div class="a" style="left:0px;top:764px;width:1028px;height:1px;background:#fff;"></div>
<div class="a" style="left:0px;top:765px;width:1028px;height:25px;background:#e8e8e8;"></div>
<div class="a" style="left:20px;top:767px;width:1px;height:21px;background:#a8a8a8;"></div>
<div class="a" style="left:21px;top:767px;width:1px;height:21px;background:#fff;"></div>
<div class="a" style="left:42px;top:767px;width:1px;height:21px;background:#a8a8a8;"></div>
<div class="a" style="left:43px;top:767px;width:1px;height:21px;background:#fff;"></div>
<div class="a" style="left:62px;top:767px;width:1px;height:21px;background:#a8a8a8;"></div>
<div class="a" style="left:63px;top:767px;width:1px;height:21px;background:#fff;"></div>
<div class="a" style="left:0px;top:788px;width:1028px;height:1px;background:#fff;"></div>
<div class="a" style="left:0px;top:790px;width:1028px;height:5px;background:#000;"></div>
<svg style="left:1px;top:770px" width="17" height="17" viewBox="0 0 17 17"><circle cx="8" cy="9.500" r="7.200" fill="#c83020"/><circle cx="8" cy="9.500" r="5" fill="none" stroke="#f8e0d8" stroke-width="1.300"/><circle cx="8" cy="9.500" r="2.300" fill="none" stroke="#f8e0d8" stroke-width="1.200"/><path d="M8.500 9L14.500 2.500" stroke="#a05030" stroke-width="1.800"/><path d="M12 1.500L16.500 0.500L15.500 5Z" fill="#7090d0"/></svg>
<svg style="left:24px;top:770px" width="17" height="16" viewBox="0 0 17 16"><g fill="#b0b8c0" stroke="#606870" stroke-width="1"><rect x="1.500" y="0.500" width="5" height="5" rx="1.500"/><rect x="1.500" y="10.500" width="5" height="5" rx="1.500"/></g><path d="M4 5.500V10.500" stroke="#606870"/><path d="M10.500 1.500L15.500 8L10.500 14.500L5.500 8Z" fill="#8098d8" stroke="#4060b0" stroke-dasharray="2 1"/><path d="M10.500 4V12M7.500 8H13.500" stroke="#fff" stroke-width="1.200"/></svg>
<svg style="left:44px;top:769px" width="17" height="17" viewBox="0 0 17 17"><rect x="0.500" y="0.500" width="15" height="15" rx="1" fill="#6888d0" stroke="#3858a8"/><rect x="3" y="1" width="10" height="7" fill="#f0f0f8"/><rect x="4" y="10" width="8" height="5.500" fill="#a8b8e0"/><rect x="5.500" y="11" width="2" height="3.500" fill="#3050a0"/></svg>
<div class="a" style="left:921px;top:767px;width:106px;height:21px;background:#e8e8e8;border-top:1px solid #8c8c8c;border-left:1px solid #8c8c8c;border-right:1px solid #fff;border-bottom:1px solid #fff"></div>
<div class="t" style="left:925px;top:770px;letter-spacing:-0.023px">1&nbsp; object selected</div>
</div>
</div></body></html>
